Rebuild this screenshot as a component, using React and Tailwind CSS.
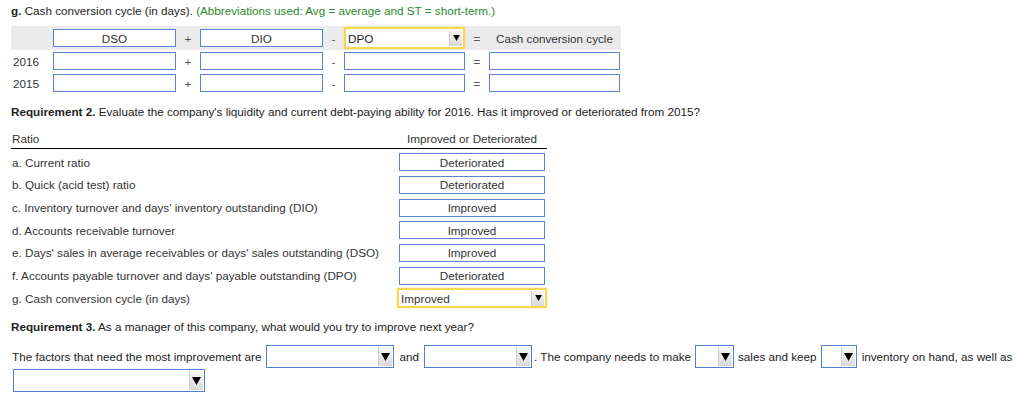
import React from 'react';

const font = "font-['Liberation_Sans',Arial,Helvetica,sans-serif]";

function Arrow({ small }) {
  return (
    <span
      className={`flex items-center justify-center bg-gradient-to-b from-[#f7f7f7] to-[#d9d9d9] border-l border-[#cfcfcf] ${
        small ? 'w-[13px] h-[15px]' : 'w-[14px] h-[19px]'
      }`}
    >
      <svg width={small ? 7 : 9} height={small ? 6 : 8} viewBox="0 0 9 8">
        <polygon points="0,0 9,0 4.5,8" fill="#000" />
      </svg>
    </span>
  );
}

function Box({ w, children, className = '' }) {
  return (
    <div
      className={`h-[18px] border border-[#5a83d6] bg-white flex items-center justify-center text-[#333] ${w} ${className}`}
    >
      {children}
    </div>
  );
}

function Dropdown({ w }) {
  return (
    <div
      className={`h-[23px] border border-[#4f7fd8] bg-white flex items-center justify-end pr-[1px] ${w}`}
    >
      <Arrow />
    </div>
  );
}

function Op({ w, children }) {
  return <div className={`${w} text-center text-[#555]`}>{children}</div>;
}

const ratios = [
  ['a. Current ratio', 'Deteriorated'],
  ['b. Quick (acid test) ratio', 'Deteriorated'],
  ["c. Inventory turnover and days' inventory outstanding (DIO)", 'Improved'],
  ['d. Accounts receivable turnover', 'Improved'],
  ["e. Days' sales in average receivables or days' sales outstanding (DSO)", 'Improved'],
  ["f. Accounts payable turnover and days' payable outstanding (DPO)", 'Deteriorated'],
];

function CycleRow({ label }) {
  return (
    <div className="flex items-center h-[22px]">
      <div className="w-[42px] pl-[2px] text-[#333]">{label}</div>
      <Box w="w-[123px]" />
      <Op w="w-[24px]">+</Op>
      <Box w="w-[123px]" />
      <Op w="w-[21px]">-</Op>
      <Box w="w-[121px]" />
      <Op w="w-[24px]">=</Op>
      <Box w="w-[131px]" />
    </div>
  );
}

export default function App() {
  return (
    <div className={`${font} bg-white w-[1024px] h-[411px] pl-[11px] pt-[3px] text-[11.7px] leading-[15px] text-[#222]`}>
      <p className="h-[15px]">
        <span className="font-bold">g.</span> Cash conversion cycle (in days).{' '}
        <span className="text-[#2b8a2b]">
          (Abbreviations used: Avg = average and ST = short-term.)
        </span>
      </p>

      <div className="mt-[8px]">
        <div className="flex items-center h-[24px] w-[610px] bg-[#ebebeb]">
          <div className="w-[42px]" />
          <Box w="w-[123px]">DSO</Box>
          <Op w="w-[24px]">+</Op>
          <Box w="w-[123px]">DIO</Box>
          <Op w="w-[21px]">-</Op>
          <div className="w-[121px] h-[22px] border-2 border-[#f4d850] bg-white flex items-center justify-between pl-[2px] pr-[1px] shadow-[0_0_2px_#f6e48a]">
            <span className="text-[#222]">DPO</span>
            <Arrow small />
          </div>
          <Op w="w-[24px]">=</Op>
          <div className="pl-[7px] text-[#333]">Cash conversion cycle</div>
        </div>
        <div>
          <CycleRow label="2016" />
          <CycleRow label="2015" />
        </div>
      </div>

      <p className="mt-[10px] h-[15px]">
        <span className="font-bold">Requirement 2.</span> Evaluate the company's liquidity and current
        debt-paying ability for 2016. Has it improved or deteriorated from 2015?
      </p>

      <div className="mt-[12px] w-[536px]">
        <div className="flex h-[18px] border-b border-black text-[#333]">
          <div className="w-[388px] pl-[1px]">Ratio</div>
          <div className="w-[146px] text-center">Improved or Deteriorated</div>
        </div>
        <div className="pt-[2px]">
          {ratios.map(([label, value]) => (
            <div key={label} className="flex items-center h-[22.67px] text-[#333]">
              <div className="w-[388px] pl-[1px]">{label}</div>
              <Box w="w-[146px]">{value}</Box>
            </div>
          ))}
          <div className="flex items-center h-[22.67px] text-[#333]">
            <div className="w-[386px] pl-[1px]">g. Cash conversion cycle (in days)</div>
            <div className="w-[150px] h-[20px] border-2 border-[#f4d850] bg-white flex items-center justify-between pl-[2px] pr-[1px] shadow-[0_0_2px_#f6e48a]">
              <span>Improved</span>
              <Arrow small />
            </div>
          </div>
        </div>
      </div>

      <p className="mt-[9px] h-[15px]">
        <span className="font-bold">Requirement 3.</span> As a manager of this company, what would you try to
        improve next year?
      </p>

      <div className="mt-[11px] flex items-center h-[24px] whitespace-nowrap">
        <span className="pl-[1px]">The factors that need the most improvement are</span>
        <div className="ml-[5px]">
          <Dropdown w="w-[128px]" />
        </div>
        <span className="ml-[5px]">and</span>
        <div className="ml-[5px]">
          <Dropdown w="w-[108px]" />
        </div>
        <span className="ml-[2px]">. The company needs to make</span>
        <div className="ml-[4px]">
          <Dropdown w="w-[39px]" />
        </div>
        <span className="ml-[4px]">sales and keep</span>
        <div className="ml-[4px]">
          <Dropdown w="w-[36px]" />
        </div>
        <span className="ml-[5px]">inventory on hand, as well as</span>
      </div>
      <div className="flex items-center h-[24px]">
        <div className="ml-[2px]">
          <Dropdown w="w-[192px]" />
        </div>
      </div>
    </div>
  );
}
